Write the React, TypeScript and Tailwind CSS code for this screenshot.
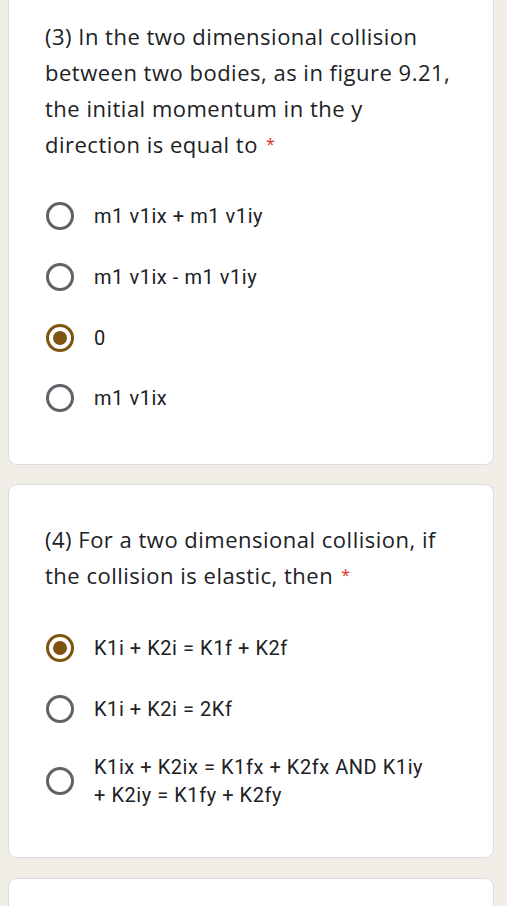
const optionFont = { fontFamily: "Roboto, 'Liberation Sans', sans-serif" };
const titleFont = { fontFamily: "'Open Sans', Roboto, sans-serif" };

type Opt = { label: string; checked?: boolean };

function Radio({ checked }: { checked?: boolean }) {
  if (checked) {
    return (
      <span className="ml-[1px] flex h-[28px] w-[28px] shrink-0 items-center justify-center rounded-full border-[3px] border-[#7d5410]">
        <span className="h-[14px] w-[14px] rounded-full bg-[#7d5410]" />
      </span>
    );
  }
  return <span className="ml-[1px] block h-[28px] w-[28px] shrink-0 rounded-full border-[3px] border-[#5f6368]" />;
}

function Option({ label, checked }: Opt) {
  return (
    <div className="flex min-h-[60.67px] items-center gap-[20px] py-[14px]">
      <Radio checked={checked} />
      <span className="pr-[22px] text-[20px] leading-[28px] tracking-[0.55px] text-[#202124]" style={optionFont}>
        {label}
      </span>
    </div>
  );
}

function Question({ title, options, gap }: { title: string; options: Opt[]; gap: string }) {
  return (
    <>
      <p className="text-[22px] leading-[36px] tracking-[0.5px] text-[#202124]" style={titleFont}>
        {title}
        <span className="ml-[8px] align-[3px] text-[16px] leading-none text-[#d93025]">*</span>
      </p>
      <div className={gap}>
        {options.map((o) => (
          <Option key={o.label} {...o} />
        ))}
      </div>
    </>
  );
}

export default function App() {
  return (
    <div className="h-[906px] overflow-hidden bg-[#f1ede7] pl-[8px] pr-[13px]">
      <div className="rounded-b-[9px] border border-t-0 border-[#dadce0] bg-white px-9 pb-[35px] pt-[18px]">
        <Question
          gap="mt-[24px]"
          title="(3) In the two dimensional collision between two bodies, as in figure 9.21, the initial momentum in the y direction is equal to"
          options={[
            { label: "m1 v1ix + m1 v1iy" },
            { label: "m1 v1ix - m1 v1iy" },
            { label: "0", checked: true },
            { label: "m1 v1ix" },
          ]}
        />
      </div>
      <div className="mt-[19px] rounded-[9px] border border-[#dadce0] bg-white px-9 pb-[34px] pt-[36px]">
        <Question
          gap="mt-[25px]"
          title="(4) For a two dimensional collision, if the collision is elastic, then"
          options={[
            { label: "K1i + K2i = K1f + K2f", checked: true },
            { label: "K1i + K2i = 2Kf" },
            { label: "K1ix + K2ix = K1fx + K2fx AND K1iy + K2iy = K1fy + K2fy" },
          ]}
        />
      </div>
      <div className="mt-[20px] h-[80px] rounded-t-[9px] border border-b-0 border-[#dadce0] bg-white" />
    </div>
  );
}
